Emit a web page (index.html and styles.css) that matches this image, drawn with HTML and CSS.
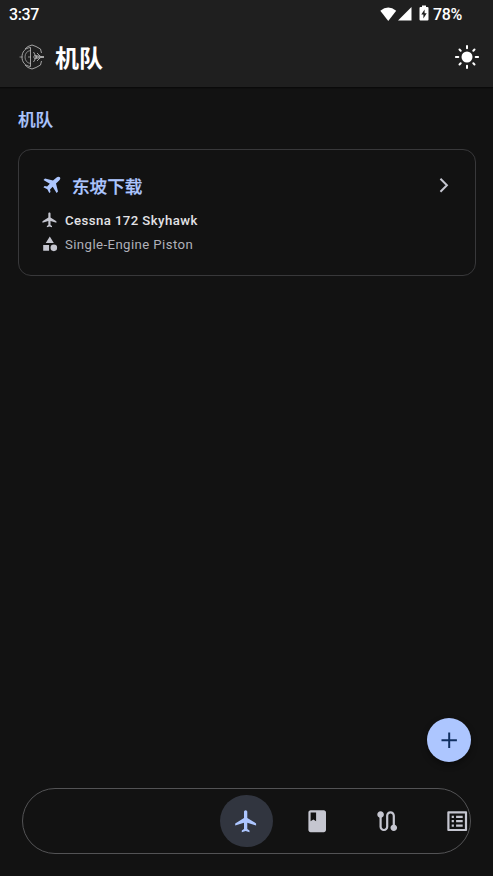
FILE: index.html
```html
<!DOCTYPE html>
<html lang="zh-CN">
<head>
<meta charset="utf-8">
<meta name="viewport" content="width=device-width, initial-scale=1">
<title>机队</title>
<link rel="stylesheet" href="styles.css">
</head>
<body>
<svg width="0" height="0" class="defs">
  <symbol id="flight" viewBox="0 0 24 24"><path d="M21 16v-2l-8-5V3.500c0-.83-.67-1.500-1.500-1.500S10 2.670 10 3.500V9l-8 5v2l8-2.500V19l-2 1.500V22l3.500-1 3.500 1v-1.500L13 19v-5.500l8 2.500z"/></symbol>
</svg>
<div class="screen">
  <header class="top">
    <div class="status">
      <span class="time">3:37</span>
      <svg class="wifi" viewBox="0 0 17 15"><path d="M0.300 3.800Q8.200-2.800 16.200 3.800L8.250 14z"/></svg>
      <svg class="signal" viewBox="0 0 14 14"><path d="M13.500 0v13.500H0z"/></svg>
      <svg class="battery" viewBox="0 0 10 16"><path fill-rule="evenodd" d="M3 0.500h4V2h1.500Q9.500 2 9.500 3v11.500q0 1-1 1h-7q-1 0-1-1V3q0-1 1-1H3zM5.600 4.500L2.300 9.600h2.100v3.900l3.300-5.200H5.600z"/></svg>
      <span class="percent">78%</span>
    </div>
    <div class="appbar">
      <svg class="logo" viewBox="0 0 26 26">
        <path d="M6 5l3-2.500 4-1.500 4 1.500L21.500 5l1 4M22.500 17l-1 4L17 23.500 13 25l-4-1.500L6 21" />
        <path d="M11.500 3.500C6 4 3 8 3 13s3 9 8.500 9.500z"/>
        <path d="M11.500 6.500C8 7 6 9.500 6 13s2 6 5.500 6.500M0.500 13h3M9 13h3" opacity=".8"/>
        <path d="M14.500 8l2 3.500 8.500 1.500-8.500 1.500-2 3.500M15 11l3 2-3 2M14 13h11M18 9l3 3M18 17l3-3"/>
      </svg>
      <h1>机队</h1>
      <svg class="sun" viewBox="0 0 26 26"><circle cx="13" cy="13" r="5.500"/><path d="M13 1.900v2.400M13 21.700v2.400M1.900 13h2.400M21.700 13h2.400M5.500 5.500l1.200 1.200M19.300 19.300l1.200 1.200M5.500 20.500l1.200-1.200M19.300 6.700l1.200-1.200"/></svg>
    </div>
  </header>
  <main>
    <h2>机队</h2>
    <section class="card">
      <div class="card-title">
        <svg class="plane" viewBox="0 0 20 20"><path d="M17.900 1.300c.8.800.3 2-.5 2.900L14 7.400l2 8.100-1.400 1.500-3.900-6.300L8 13.400l.5 2.600-1.200 1.100-2-3.900-3.900-2 1.200-1.200 2.500.6 2.700-2.800L1.500 4 3 2.600l8 2 3.600-3.200c.9-.8 2.500-1 3.300-.1z"/></svg>
        <h3>东坡下载</h3>
        <svg class="chevron" viewBox="0 0 24 24"><path d="M9.500 6.100L15.400 12l-5.900 5.900"/></svg>
      </div>
      <div class="row model"><svg><use href="#flight"/></svg><span>Cessna 172 Skyhawk</span></div>
      <div class="row kind"><svg viewBox="0 0 24 24"><path d="M12 2l-5.500 9h11zM3 13.500h8v8H3z"/><circle cx="17.500" cy="17.500" r="4.500"/></svg><span>Single-Engine Piston</span></div>
    </section>
  </main>
  <button class="fab" aria-label="添加"><svg viewBox="0 0 24 24"><path d="M19 12.900h-6.100V19h-1.800v-6.100H5v-1.800h6.100V5h1.800v6.100H19z"/></svg></button>
  <nav>
    <a class="active"><svg><use href="#flight"/></svg></a>
    <a><svg viewBox="0 0 24 24"><path d="M18 2H6c-1.100 0-2 .9-2 2v16c0 1.100.9 2 2 2h12c1.100 0 2-.9 2-2V4c0-1.100-.9-2-2-2zM6 4h5v8l-2.500-1.500L6 12V4z"/></svg></a>
    <a><svg viewBox="0 0 24 24"><path d="M19 15.180V7c0-2.210-1.790-4-4-4s-4 1.790-4 4v10c0 1.100-.9 2-2 2s-2-.9-2-2V8.820C8.160 8.400 9 7.300 9 6c0-1.660-1.340-3-3-3S3 4.340 3 6c0 1.300.84 2.400 2 2.820V17c0 2.210 1.790 4 4 4s4-1.790 4-4V7c0-1.100.9-2 2-2s2 .9 2 2v8.180c-1.160.42-2 1.520-2 2.820 0 1.660 1.340 3 3 3s3-1.340 3-3c0-1.300-.84-2.400-2-2.820z"/></svg></a>
    <a><svg viewBox="0 0 24 24"><path fill-rule="evenodd" d="M3.900 3h16.200q.9 0 .9.900v16.200q0 .9-.9.900H3.900q-.9 0-.9-.9V3.900q0-.9.900-.9zM5 5v14h14V5z"/><path d="M11 7h6v2h-6zM11 11h6v2h-6zM11 15h6v2h-6zM7 7h2v2H7zM7 11h2v2H7zM7 15h2v2H7z"/></svg></a>
  </nav>
</div>
</body>
</html>
```
FILE: styles.css
```css
* { box-sizing: border-box; }
body {
  margin: 0;
  background: #121212;
  color: #fff;
  font-family: Roboto, "Noto Sans CJK SC", sans-serif;
}
.defs { position: absolute; }
svg { display: block; flex: none; fill: currentColor; }
h1, h2, h3 { margin: 0; }
.screen {
  height: 876px;
  display: flex;
  flex-direction: column;
  overflow: hidden;
}
.top {
  height: 87px;
  flex: none;
  background: #1f1f1f;
  box-shadow: 0 1px 1px #0a0a0a;
}
.status {
  height: 28px;
  padding: 0 31px 0 9px;
  display: flex;
  align-items: center;
  font-size: 16px;
  font-weight: 500;
  line-height: 28px;
}
.time { margin-right: auto; padding-top: 1px; letter-spacing: -.4px; }
.percent { padding-top: 1px; letter-spacing: -.3px; }
.wifi { width: 17px; height: 15px; margin: 0 1px 0 0; }
.signal { width: 14px; height: 14px; margin-right: 7px; }
.battery { width: 10px; height: 16px; margin: -2px 4px 0 0; }
.appbar {
  height: 58px;
  padding: 0 13px 0 19px;
  display: flex;
  align-items: center;
}
.logo {
  width: 26px;
  height: 26px;
  fill: none;
  stroke: #c4c4c4;
  stroke-width: .8;
}
.appbar h1 {
  margin-left: 10px;
  padding-top: 4px;
  font-size: 24px;
  line-height: 32px;
  font-weight: 700;
}
.sun {
  width: 26px;
  height: 26px;
  margin-left: auto;
  stroke: #fff;
  stroke-width: 2;
  stroke-linecap: round;
}
.sun circle { stroke: none; }
main {
  flex: 1;
  padding: 19px 17.500px 0 18px;
  color: #adc6ff;
}
h2 {
  font-size: 17.600px;
  line-height: 28px;
  font-weight: 500;
  -webkit-text-stroke: .25px;
}
.card {
  height: 127px;
  margin-top: 15px;
  padding: 23px 17px 0 24px;
  border: 1px solid #38383a;
  border-radius: 13px;
}
.card-title { display: flex; align-items: center; height: 26px; }
.plane { width: 20px; height: 20px; margin-left: -1px; }
.card-title h3 {
  margin-left: 10px;
  padding-top: 1px;
  font-size: 17.600px;
  line-height: 26px;
  font-weight: 500;
  -webkit-text-stroke: .25px;
}
.chevron {
  width: 26.400px;
  height: 26.400px;
  margin: -2px 1px 0 auto;
  fill: none;
  stroke: #c5c6d0;
  stroke-width: 1.800;
}
.row {
  display: flex;
  align-items: center;
  gap: 6.400px;
  height: 24px;
  margin-left: -2px;
  color: #c5c6d0;
}
.row svg { width: 17.600px; height: 17.600px; }
.model { margin-top: 9px; color: #e3e2e6; font-size: 13.200px; font-weight: 500; letter-spacing: .42px; }
.model svg { color: #c5c6d0; }
.kind { font-size: 13.200px; letter-spacing: .42px; }
.kind span { color: #b0b1ba; }
.fab {
  width: 44px;
  height: 44px;
  margin: 0 22px 26px auto;
  padding: 0;
  display: grid;
  place-items: center;
  flex: none;
  border: 0;
  border-radius: 50%;
  background: #adc6ff;
  color: #102f60;
  box-shadow: 0 3px 6px rgba(0, 0, 0, .4);
}
.fab svg { width: 26.400px; height: 26.400px; }
nav {
  height: 66px;
  flex: none;
  margin: 0 22px;
  margin-bottom: 22px;
  padding-left: 197px;
  display: flex;
  align-items: center;
  gap: 17.600px;
  border: 1px solid #535355;
  border-radius: 33px;
  color: #c5c6d0;
}
nav a {
  width: 52.800px;
  height: 52.800px;
  flex: none;
  display: grid;
  place-items: center;
  border-radius: 50%;
}
nav svg { width: 26.400px; height: 26.400px; }
nav .active { background: #31353f; color: #adc6ff; }
```
